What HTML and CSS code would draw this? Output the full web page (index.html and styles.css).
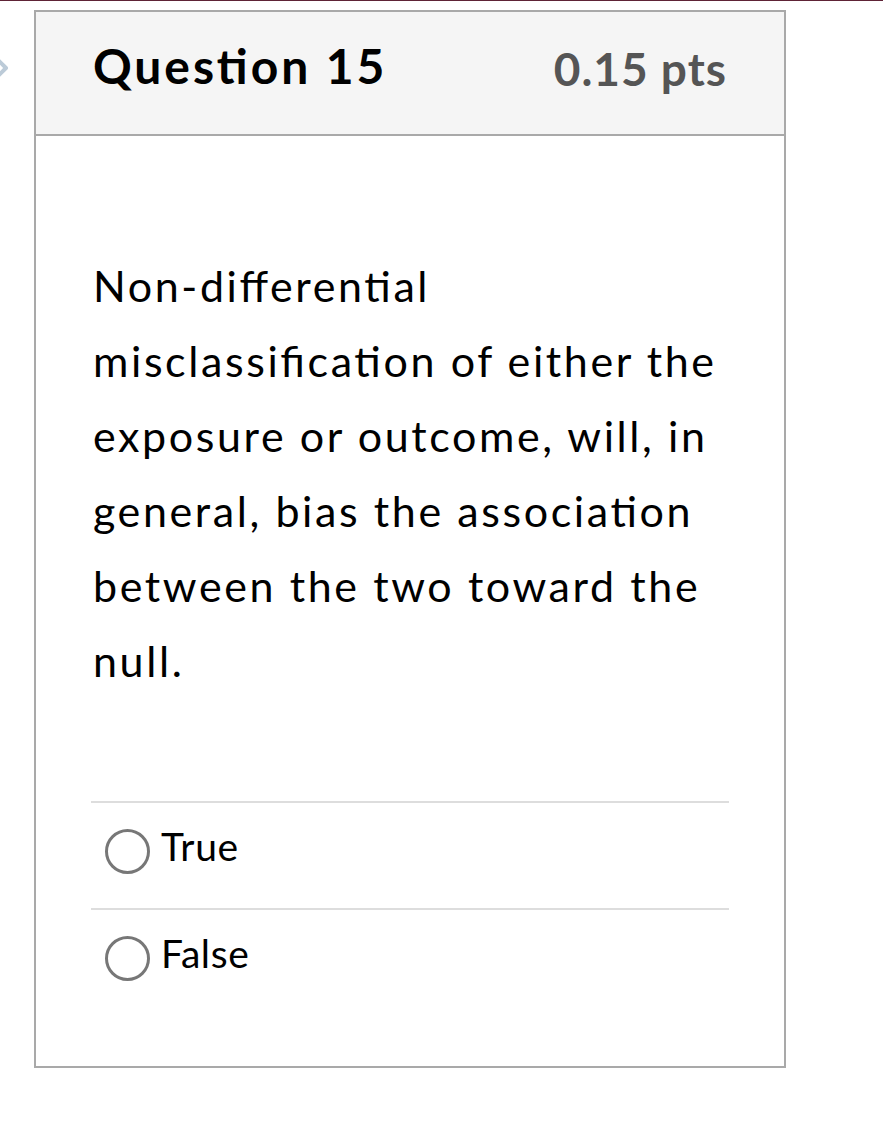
FILE: index.html
```html
<!DOCTYPE html>
<html lang="en">
<head>
<meta charset="utf-8">
<title>Question 15</title>
<link rel="stylesheet" href="styles.css">
</head>
<body>
<div class="topbar"></div>
<svg class="nav-arrow" width="10" height="24" viewBox="0 0 10 24" aria-hidden="true">
  <path d="M-4 2 L6 12 L-4 22" fill="none" stroke="#bccbd8" stroke-width="4" stroke-linejoin="round"/>
</svg>
<div class="question">
  <div class="q-header">
    <h2 class="q-title">Question 15</h2>
    <span class="q-points">0.15 pts</span>
  </div>
  <div class="q-body">
    <p class="q-text">Non-differential misclassification of either the exposure or outcome, will, in general, bias the association between the two toward the null.</p>
    <div class="answers">
      <label class="answer"><span class="radio"></span><span class="answer-label">True</span></label>
      <label class="answer"><span class="radio"></span><span class="answer-label">False</span></label>
    </div>
  </div>
</div>
</body>
</html>
```

FILE: styles.css
```css
html, body {
  margin: 0;
  padding: 0;
  background: #ffffff;
}
body {
  font-family: Lato, "Open Sans", sans-serif;
  color: #000;
  position: relative;
  width: 883px;
  height: 1134px;
  overflow: hidden;
  font-variant-ligatures: common-ligatures;
  font-feature-settings: "liga" 1;
}
.topbar {
  height: 1px;
  background: #5e2336;
}
.nav-arrow {
  position: absolute;
  left: 0;
  top: 56px;
}
.question {
  margin: 9px 0 0 34px;
  width: 748px;
  border: 2px solid #a9a9a9;
  box-sizing: content-box;
}
.q-header {
  height: 124px;
  background: #f5f5f5;
  border-bottom: 2px solid #a9a9a9;
  display: flex;
  align-items: center;
  justify-content: space-between;
  padding: 0 57px 15px 57px;
  box-sizing: border-box;
}
.q-title {
  margin: 0;
  font-size: 48px;
  font-weight: 700;
  color: #000;
  line-height: 1;
  letter-spacing: 2.9px;
}
.q-points {
  font-size: 46px;
  font-weight: 700;
  color: #555;
  line-height: 1;
  margin-top: 6px;
  letter-spacing: 1px;
}
.q-body {
  padding: 112px 55px 0 57px;
  height: 930px;
  box-sizing: border-box;
}
.q-text {
  margin: 0;
  font-size: 43px;
  line-height: 75px;
  letter-spacing: 2.6px;
  width: 645px;
}
.answers {
  margin-top: 103px;
  margin-left: -2px;
  width: 638px;
}
.answer {
  display: flex;
  align-items: center;
  height: 97px;
  border-top: 2px solid #dddddd;
  padding-left: 14px;
  padding-bottom: 8px;
  box-sizing: content-box;
}
.radio {
  width: 39px;
  height: 39px;
  border: 3px solid #777;
  border-radius: 50%;
  flex: none;
  margin-right: 11px;
}
.answer-label {
  font-size: 39px;
  line-height: 1;
  margin-top: -11px;
  letter-spacing: 0.6px;
}
```
